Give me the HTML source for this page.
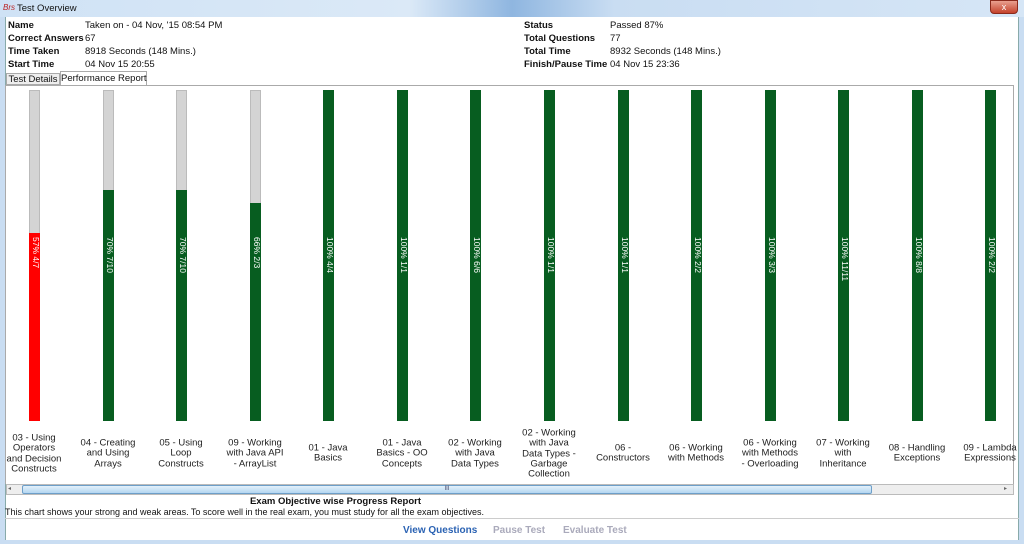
<!DOCTYPE html><html><head><style>
*{margin:0;padding:0;box-sizing:border-box}
body{width:1024px;height:544px;overflow:hidden;background:#fff;font-family:"Liberation Sans",sans-serif;font-size:9.5px;color:#111;position:relative}
.a{position:absolute;white-space:nowrap}
.k{font-weight:bold}
.bar{position:absolute;top:90px;width:11px;height:331px;background:#d4d4d4;border:1px solid #bbb}
.f{position:absolute;left:-1px;right:-1px;bottom:-1px}
.t{position:absolute;left:0;width:11px;color:#fff;font-size:8.5px;white-space:nowrap;writing-mode:vertical-rl;line-height:11px;text-align:left}
.lb{position:absolute;width:74px;text-align:center;font-size:9.5px;line-height:10.3px;color:#222;top:454px;transform:translateY(-50%)}
</style></head><body>
<div class="a" style="left:0;top:0;width:1024px;height:17px;background:linear-gradient(90deg,#cfe2f5,#dbe9f7 40%,#8fb6e0 50%,#c9ddf2 60%,#d6e6f6)"></div>
<div class="a" style="left:3px;top:3px;font-size:8px;color:#b22;font-style:italic">Brs</div>
<div class="a" style="left:17px;top:3px;font-size:9.5px">Test Overview</div>
<div class="a" style="left:990px;top:0;width:28px;height:14px;background:linear-gradient(#e9a08f,#c4422c);border:1px solid #8a2a1c;border-radius:0 0 4px 4px;color:#fff;font-size:9px;text-align:center;line-height:12px">x</div>
<div class="a" style="left:0;top:17px;width:5px;height:527px;background:#c9ddf2"></div>
<div class="a" style="left:1019px;top:17px;width:5px;height:527px;background:#c9ddf2"></div>
<div class="a" style="left:5px;top:17px;width:1014px;height:527px;background:#fff;border-left:1px solid #8aa;border-right:1px solid #8aa"></div>

<div class="a k" style="left:8px;top:20px">Name</div><div class="a" style="left:85px;top:20px">Taken on - 04 Nov, '15 08:54 PM</div>
<div class="a k" style="left:8px;top:33px">Correct Answers</div><div class="a" style="left:85px;top:33px">67</div>
<div class="a k" style="left:8px;top:46px">Time Taken</div><div class="a" style="left:85px;top:46px">8918 Seconds (148 Mins.)</div>
<div class="a k" style="left:8px;top:59px">Start Time</div><div class="a" style="left:85px;top:59px">04 Nov 15 20:55</div>
<div class="a k" style="left:524px;top:20px">Status</div><div class="a" style="left:610px;top:20px">Passed 87%</div>
<div class="a k" style="left:524px;top:33px">Total Questions</div><div class="a" style="left:610px;top:33px">77</div>
<div class="a k" style="left:524px;top:46px">Total Time</div><div class="a" style="left:610px;top:46px">8932 Seconds (148 Mins.)</div>
<div class="a k" style="left:524px;top:59px">Finish/Pause Time</div><div class="a" style="left:610px;top:59px">04 Nov 15 23:36</div>

<div class="a" style="left:6px;top:73px;width:54px;height:12px;background:#eee;border:1px solid #aaa;text-align:center;line-height:11px">Test Details</div>
<div class="a" style="left:60px;top:71px;width:87px;height:14px;background:#fff;border:1px solid #aaa;border-bottom:none;text-align:center;line-height:13px">Performance Report</div>
<div class="a" style="left:5px;top:85px;width:1009px;height:399px;border:1px solid #aaa;border-bottom:none"></div>

<div class="bar" style="left:29px"><div class="f" style="top:142px;background:#f00"></div><div class="t" style="top:146px">57% 4/7</div></div>
<div class="bar" style="left:103px"><div class="f" style="top:99px;background:#075d20"></div><div class="t" style="top:146px">70% 7/10</div></div>
<div class="bar" style="left:176px"><div class="f" style="top:99px;background:#075d20"></div><div class="t" style="top:146px">70% 7/10</div></div>
<div class="bar" style="left:250px"><div class="f" style="top:112px;background:#075d20"></div><div class="t" style="top:146px">66% 2/3</div></div>
<div class="bar" style="left:323px;background:#075d20;border-color:#075d20"><div class="t" style="top:146px">100% 4/4</div></div>
<div class="bar" style="left:397px;background:#075d20;border-color:#075d20"><div class="t" style="top:146px">100% 1/1</div></div>
<div class="bar" style="left:470px;background:#075d20;border-color:#075d20"><div class="t" style="top:146px">100% 6/6</div></div>
<div class="bar" style="left:544px;background:#075d20;border-color:#075d20"><div class="t" style="top:146px">100% 1/1</div></div>
<div class="bar" style="left:618px;background:#075d20;border-color:#075d20"><div class="t" style="top:146px">100% 1/1</div></div>
<div class="bar" style="left:691px;background:#075d20;border-color:#075d20"><div class="t" style="top:146px">100% 2/2</div></div>
<div class="bar" style="left:765px;background:#075d20;border-color:#075d20"><div class="t" style="top:146px">100% 3/3</div></div>
<div class="bar" style="left:838px;background:#075d20;border-color:#075d20"><div class="t" style="top:146px">100% 11/11</div></div>
<div class="bar" style="left:912px;background:#075d20;border-color:#075d20"><div class="t" style="top:146px">100% 8/8</div></div>
<div class="bar" style="left:985px;background:#075d20;border-color:#075d20"><div class="t" style="top:146px">100% 2/2</div></div>

<div class="lb" style="left:-3px">03 - Using<br>Operators<br>and Decision<br>Constructs</div>
<div class="lb" style="left:71px">04 - Creating<br>and Using<br>Arrays</div>
<div class="lb" style="left:144px">05 - Using<br>Loop<br>Constructs</div>
<div class="lb" style="left:218px">09 - Working<br>with Java API<br>- ArrayList</div>
<div class="lb" style="left:291px">01 - Java<br>Basics</div>
<div class="lb" style="left:365px">01 - Java<br>Basics - OO<br>Concepts</div>
<div class="lb" style="left:438px">02 - Working<br>with Java<br>Data Types</div>
<div class="lb" style="left:512px">02 - Working<br>with Java<br>Data Types -<br>Garbage<br>Collection</div>
<div class="lb" style="left:586px">06 -<br>Constructors</div>
<div class="lb" style="left:659px">06 - Working<br>with Methods</div>
<div class="lb" style="left:733px">06 - Working<br>with Methods<br>- Overloading</div>
<div class="lb" style="left:806px">07 - Working<br>with<br>Inheritance</div>
<div class="lb" style="left:880px">08 - Handling<br>Exceptions</div>
<div class="lb" style="left:953px">09 - Lambda<br>Expressions</div>

<div class="a" style="left:6px;top:484px;width:1008px;height:11px;background:#eee;border:1px solid #bbb"></div>
<div class="a" style="left:8px;top:486px;width:9px;height:7px;font-size:6px;color:#666;line-height:7px">◂</div>
<div class="a" style="left:1004px;top:486px;width:9px;height:7px;font-size:6px;color:#666;line-height:7px">▸</div>
<div class="a" style="left:22px;top:485px;width:850px;height:9px;background:linear-gradient(#e3f1fb,#b4d6f1);border:1px solid #6d9fc9;border-radius:2px;text-align:center;font-size:6px;line-height:7px;color:#446">III</div>

<div class="a k" style="left:0;width:671px;top:496px;text-align:center;font-size:9.5px">Exam Objective wise Progress Report</div>
<div class="a" style="left:5px;top:507px;font-size:9px">This chart shows your strong and weak areas. To score well in the real exam, you must study for all the exam objectives.</div>
<div class="a" style="left:5px;top:518px;width:1014px;height:1px;background:#ccc"></div>
<div class="a k" style="left:403px;top:525px;color:#2a62b3;font-size:10px">View Questions</div>
<div class="a k" style="left:493px;top:525px;color:#aab;font-size:10px">Pause Test</div>
<div class="a k" style="left:563px;top:525px;color:#aab;font-size:10px">Evaluate Test</div>
<div class="a" style="left:0;top:540px;width:1024px;height:4px;background:#c9ddf2"></div>
</body></html>
